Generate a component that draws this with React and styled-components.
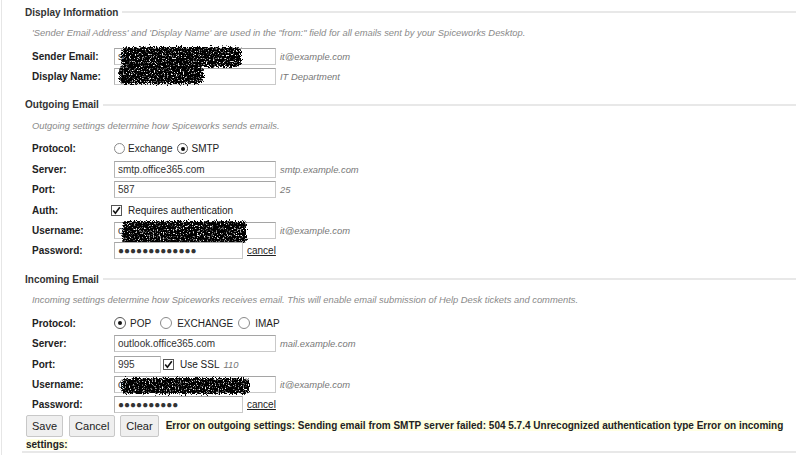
import React from "react";
import styled, { createGlobalStyle } from "styled-components";

const GlobalStyle = createGlobalStyle`
  html, body { margin: 0; padding: 0; background: #fff; }
  body { font-family: "Liberation Sans", Arial, sans-serif; color: #222; }
`;

const Page = styled.div`
  box-sizing: border-box;
  width: 797px;
  height: 455px;
  margin-left: 1px;
  border-left: 1px solid #e6e6e6;
  padding: 0 2px 0 20px;
  overflow: hidden;
`;

const Section = styled.section`
  margin-top: ${(p) => p.$gap || 0}px;
`;

const Header = styled.div`
  display: flex;
  align-items: center;
  height: 24px;
`;

const Legend = styled.span`
  padding: 0 4px 0 3px;
  font-size: 10px;
  font-weight: bold;
  color: #333;
  white-space: nowrap;
`;

const Rule = styled.div`
  flex: 1;
  height: 2px;
  background: #e8e8e8;
`;

const Desc = styled.div`
  padding: 3px 0 7px 10px;
  font-size: 9.4px;
  line-height: 12px;
  font-style: italic;
  color: #8a8a8a;
  white-space: nowrap;
`;

const Row = styled.div`
  display: flex;
  align-items: center;
  height: 20.4px;
  padding-left: 10px;
`;

const Label = styled.div`
  width: 82px;
  flex: none;
  font-size: 10px;
  font-weight: bold;
  color: #222;
`;

const InputWrap = styled.div`
  position: relative;
  display: inline-flex;
  flex: none;
`;

const Input = styled.div`
  box-sizing: border-box;
  width: ${(p) => p.$w}px;
  height: 17px;
  border: 1px solid #c9c9c9;
  border-top-color: #a5a5a5;
  border-left-color: #b5b5b5;
  background: #fff;
  padding: 0 3px;
  font-size: 10px;
  line-height: 15px;
  color: #333;
  white-space: nowrap;
  overflow: hidden;
`;

const Hint = styled.span`
  margin-left: 4px;
  font-size: 9.4px;
  font-style: italic;
  color: #777;
  white-space: nowrap;
`;

const Link = styled.span`
  margin-left: 4px;
  font-size: 10px;
  color: #222;
  text-decoration: underline;
`;

const Option = styled.span`
  display: inline-flex;
  align-items: center;
  margin-right: ${(p) => p.$mr || 0}px;
  margin-left: ${(p) => p.$ml || 0}px;
  font-size: 10px;
  color: #222;
  white-space: nowrap;
`;

const Radio = styled.span`
  box-sizing: border-box;
  width: ${(p) => p.$size}px;
  height: ${(p) => p.$size}px;
  margin-right: ${(p) => p.$gap}px;
  border-radius: 50%;
  border: 1px solid ${(p) => (p.$on ? "#555" : "#8a8a8a")};
  background: #fff;
  display: inline-flex;
  align-items: center;
  justify-content: center;
  &::after {
    content: "";
    display: ${(p) => (p.$on ? "block" : "none")};
    width: 4px;
    height: 4px;
    border-radius: 50%;
    background: #111;
  }
`;

const Box = styled.span`
  box-sizing: border-box;
  width: 11px;
  height: 11px;
  margin-right: ${(p) => p.$gap}px;
  border: 1px solid #555;
  background: #fff;
  display: inline-flex;
  align-items: center;
  justify-content: center;
`;

const Redact = styled.div`
  position: absolute;
  left: ${(p) => p.$x}px;
  top: ${(p) => p.$y}px;
  pointer-events: none;
`;

const Actions = styled.div`
  padding: 0 0 0 4px;
  line-height: 16px;
  font-size: 10px;
  font-weight: bold;
  color: #222;
  border-bottom: 2px solid #e8e8e8;
  height: 38px;
  box-sizing: border-box;
`;

const Button = styled.span`
  display: inline-block;
  box-sizing: border-box;
  height: 22px;
  line-height: 20px;
  padding: 0 5px;
  margin-right: ${(p) => p.$mr}px;
  vertical-align: middle;
  border: 1px solid #c8c8c8;
  border-radius: 2px;
  background: #efefef;
  font-size: 11px;
  font-weight: normal;
  color: #222;
`;

const ErrorText = styled.span`
  margin-left: ${(p) => p.$ml || 0}px;
  background: #ffffe2;
`;

function Scribble({ w, h, seed, id }) {
  return (
    <svg width={w} height={h} viewBox={`0 0 ${w} ${h}`}>
      <defs>
        <filter id={id} x="-5%" y="-15%" width="110%" height="130%">
          <feTurbulence type="fractalNoise" baseFrequency="0.7" numOctaves="3" seed={seed} result="noise" />
          <feDisplacementMap in="SourceGraphic" in2="noise" scale="7" xChannelSelector="R" yChannelSelector="G" result="disp" />
          <feColorMatrix in="noise" type="matrix" values="0 0 0 0 0  0 0 0 0 0  0 0 0 0 0  -5 0 0 0 3.8" result="speck" />
          <feComposite in="speck" in2="disp" operator="in" />
        </filter>
      </defs>
      <rect x="3" y="3" width={w - 6} height={h - 6} rx="5" fill="#000" filter={`url(#${id})`} />
    </svg>
  );
}

function TextField({ w, value, hint, cancel, redact }) {
  return (
    <>
      <InputWrap>
        <Input $w={w}>{value}</Input>
        {redact && (
          <Redact $x={redact.x} $y={redact.y}>
            <Scribble w={redact.w} h={redact.h} seed={redact.seed} id={redact.id} />
          </Redact>
        )}
      </InputWrap>
      {hint && <Hint>{hint}</Hint>}
      {cancel && <Link>cancel</Link>}
    </>
  );
}

function Check({ gap }) {
  return (
    <Box $gap={gap}>
      <svg width="9" height="9" viewBox="0 0 9 9">
        <path d="M1.2 4.6 L3.4 7.2 L7.8 1.3" fill="none" stroke="#111" strokeWidth="1.6" />
      </svg>
    </Box>
  );
}

function SectionBlock({ title, desc, gap, children }) {
  return (
    <Section $gap={gap}>
      <Header>
        <Legend>{title}</Legend>
        <Rule />
      </Header>
      <Desc>{desc}</Desc>
      {children}
    </Section>
  );
}

export default function App() {
  return (
    <>
      <GlobalStyle />
      <Page>
        <SectionBlock
          title="Display Information"
          desc={`'Sender Email Address' and 'Display Name' are used in the "from:" field for all emails sent by your Spiceworks Desktop.`}
        >
          <Row>
            <Label>Sender Email:</Label>
            <TextField w={162} value="s" hint="it@example.com" redact={{ x: 4, y: -4, w: 126, h: 26, seed: 3, id: "r1" }} />
          </Row>
          <Row>
            <Label>Display Name:</Label>
            <TextField w={162} value="" hint="IT Department" redact={{ x: 2, y: -5, w: 90, h: 24, seed: 7, id: "r2" }} />
          </Row>
        </SectionBlock>

        <SectionBlock title="Outgoing Email" desc="Outgoing settings determine how Spiceworks sends emails." gap={6}>
          <Row>
            <Label>Protocol:</Label>
            <Option $mr={5}>
              <Radio $size={11} $gap={3} />
              Exchange
            </Option>
            <Option>
              <Radio $size={11} $gap={3} $on />
              SMTP
            </Option>
          </Row>
          <Row>
            <Label>Server:</Label>
            <TextField w={162} value="smtp.office365.com" hint="smtp.example.com" />
          </Row>
          <Row>
            <Label>Port:</Label>
            <TextField w={162} value="587" hint="25" />
          </Row>
          <Row>
            <Label>Auth:</Label>
            <Option $ml={-3}>
              <Check gap={6} />
              Requires authentication
            </Option>
          </Row>
          <Row>
            <Label>Username:</Label>
            <TextField w={162} value="c" hint="it@example.com" redact={{ x: 5, y: -4, w: 130, h: 29, seed: 11, id: "r3" }} />
          </Row>
          <Row>
            <Label>Password:</Label>
            <TextField w={129} value="●●●●●●●●●●●●●" cancel />
          </Row>
        </SectionBlock>

        <SectionBlock
          title="Incoming Email"
          desc="Incoming settings determine how Spiceworks receives email. This will enable email submission of Help Desk tickets and comments."
          gap={6}
        >
          <Row>
            <Label>Protocol:</Label>
            <Option $mr={9}>
              <Radio $size={12} $gap={4} $on />
              POP
            </Option>
            <Option $mr={5}>
              <Radio $size={12} $gap={5} />
              EXCHANGE
            </Option>
            <Option>
              <Radio $size={12} $gap={5} />
              IMAP
            </Option>
          </Row>
          <Row>
            <Label>Server:</Label>
            <TextField w={162} value="outlook.office365.com" hint="mail.example.com" />
          </Row>
          <Row>
            <Label>Port:</Label>
            <TextField w={47} value="995" />
            <Option $ml={2}>
              <Check gap={6} />
              Use SSL
            </Option>
            <Hint>110</Hint>
          </Row>
          <Row>
            <Label>Username:</Label>
            <TextField w={162} value="c" hint="it@example.com" redact={{ x: 4, y: -1, w: 134, h: 22, seed: 19, id: "r4" }} />
          </Row>
          <Row>
            <Label>Password:</Label>
            <TextField w={129} value="●●●●●●●●●●" cancel />
          </Row>
        </SectionBlock>

        <Actions>
          <Button $mr={6}>Save</Button>
          <Button $mr={5}>Cancel</Button>
          <Button $mr={5}>Clear</Button>
          <ErrorText $ml={2}>
            Error on outgoing settings: Sending email from SMTP server failed: 504 5.7.4 Unrecognized authentication type Error on incoming
          </ErrorText>{" "}
          <ErrorText>settings:</ErrorText>
        </Actions>
      </Page>
    </>
  );
}
